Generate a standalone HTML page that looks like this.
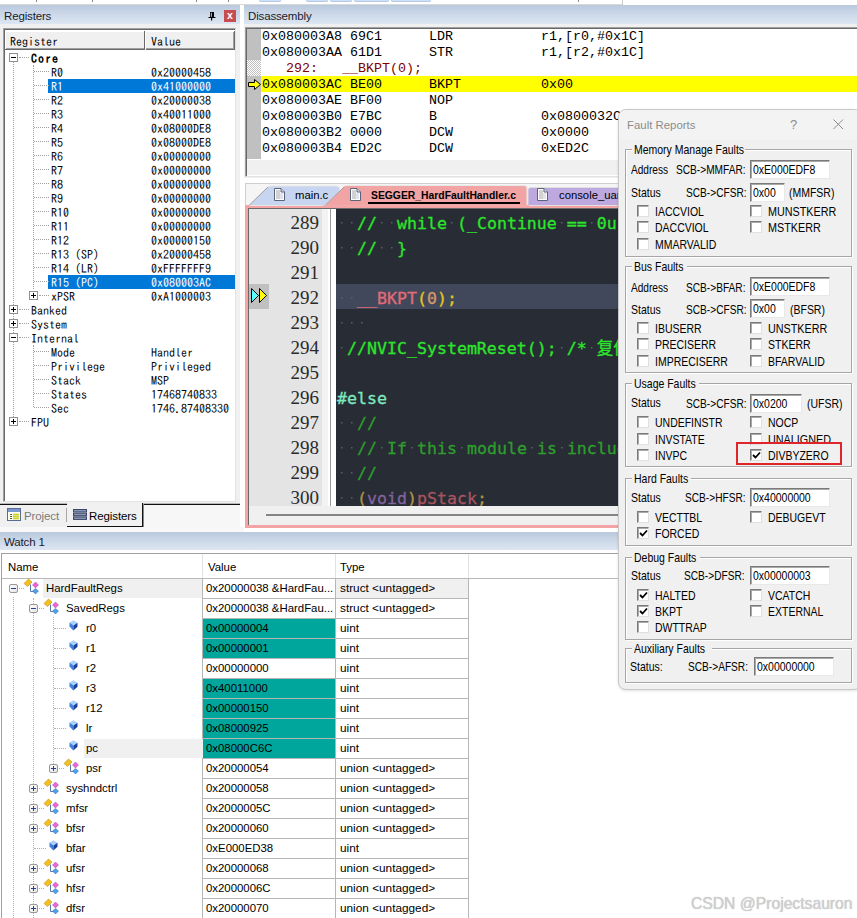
<!DOCTYPE html>
<html><head><meta charset="utf-8"><title>Keil Fault Reports</title>
<style>
html,body{margin:0;padding:0;}
body{width:857px;height:918px;overflow:hidden;background:#fff;position:relative;font-family:"Liberation Sans",sans-serif;font-size:12px;color:#000;}
.abs{position:absolute;}
.hdr{position:absolute;height:19px;background:linear-gradient(#b9c8dc,#c9d6e7 40%,#dde6f2);font:11.5px/22px "Liberation Sans",sans-serif;color:#1a1a2a;letter-spacing:-.15px;}
/* registers */
#reg{position:absolute;left:0;top:24px;width:240px;height:503px;background:#f0f0f0;}
.rg{font-family:"IPAGothic","Liberation Mono",monospace;font-size:12px;line-height:14px;white-space:pre;}
.rr{position:absolute;left:0;height:14px;width:232px;}
.rr span{position:absolute;top:0;}
.sel{background:#0078d7;color:#fff;}
.box{position:absolute;width:7px;height:7px;border:1px solid #919191;background:#fff;}
.box i{position:absolute;left:1px;top:3px;width:5px;height:1px;background:#000;}
.box b{position:absolute;left:3px;top:1px;width:1px;height:5px;background:#000;}
.wb{border-color:#989898;border-radius:2px;background:linear-gradient(135deg,#fff,#e4e4e4);}
.wb i,.wb b{background:#2a3f8f;}
.dv{position:absolute;width:0;border-left:1px dotted #a0a0a0;}
.dh{position:absolute;height:0;border-top:1px dotted #a0a0a0;}
/* disassembly */
.dis{font-family:"Liberation Mono",monospace;font-size:13.33px;line-height:18px;white-space:pre;position:absolute;left:262px;height:16px;}
/* editor */
.ln{position:absolute;left:249px;width:70px;text-align:right;font:19px/28px "Liberation Serif",serif;color:#2a2a2a;height:25px;}
.cd{position:absolute;left:337px;height:25px;font:16.6px/29px "DejaVu Sans Mono","Noto Sans CJK SC",monospace;white-space:pre;color:#2ce62c;-webkit-text-stroke:.3px;}
.ws{background:linear-gradient(#566070,#566070) 4.300px 7.500px/1.500px 1.500px no-repeat;}
/* watch */
.wr{position:absolute;left:3px;width:465px;height:20px;font:11.4px/19px "Liberation Sans",sans-serif;}
.wr u{position:absolute;left:199px;top:19px;width:267px;height:1px;background:#b6b6b6;}
.wr span{position:absolute;top:0;white-space:pre;}
.teal{position:absolute;left:200px;top:0;width:132px;height:19px;background:#00a59b;}
/* dialog */
#dlg{position:absolute;left:618px;top:109px;width:242px;height:579px;background:#f0f0f0;border:1px solid #c8c8c8;border-radius:8px;box-shadow:0 1px 3px rgba(0,0,0,.12);font:12.2px "Liberation Sans",sans-serif;color:#000;}
.gb{position:absolute;left:6px;width:225px;border:1px solid #a6a6a6;box-shadow:1px 1px 0 #fff, inset 1px 1px 0 #fff;}
.gl{position:absolute;left:6px;top:-7px;background:#f0f0f0;height:14px;}
.gl b{font-weight:normal;display:block;position:absolute;left:2px;top:0;line-height:14px;white-space:pre;transform:scaleX(.86);transform-origin:0 50%;}
.t{position:absolute;white-space:pre;line-height:14px;transform:scaleX(.86);transform-origin:0 50%;}
.in{position:absolute;height:17px;background:#fff;border:1px solid;border-color:#7a7a7a #e8e8e8 #e8e8e8 #7a7a7a;box-shadow:inset 1px 1px 0 #a8a8a8;line-height:18px;white-space:pre;box-sizing:content-box;}
.in b{font-weight:normal;display:block;position:absolute;left:2px;top:0;transform:scaleX(.86);transform-origin:0 50%;}
.cb{position:absolute;width:10px;height:10px;background:#fff;border:1px solid;border-color:#7a7a7a #e0e0e0 #e0e0e0 #7a7a7a;box-shadow:inset 1px 1px 0 #a8a8a8;}
</style></head><body>

<div class="abs" style="left:0;top:0;width:857px;height:5px;background:#fff"></div>
<div class="abs" style="left:0;top:4px;width:623px;height:1px;background:#d8d8d8"></div>
<div class="abs" style="left:622px;top:0;width:1px;height:5px;background:#c8c8c8"></div>
<div class="abs" style="left:36px;top:0;width:1px;height:2px;background:#8a8a8a"></div>
<div class="abs" style="left:92px;top:0;width:1px;height:2px;background:#8a8a8a"></div>
<div class="abs" style="left:196px;top:0;width:1px;height:2px;background:#8a8a8a"></div>
<div class="abs" style="left:228px;top:0;width:1px;height:2px;background:#8a8a8a"></div>
<div class="abs" style="left:578px;top:0;width:1px;height:2px;background:#8a8a8a"></div>
<div class="abs" style="left:259px;top:0;width:22px;height:2px;background:#cfe0f6;border:1px solid #b4cbe8;border-top:none;border-radius:0 0 3px 3px;box-sizing:border-box"></div>
<div class="abs" style="left:306px;top:0;width:22px;height:2px;background:#cfe0f6;border:1px solid #b4cbe8;border-top:none;border-radius:0 0 3px 3px;box-sizing:border-box"></div>
<div class="abs" style="left:330px;top:0;width:22px;height:2px;background:#cfe0f6;border:1px solid #b4cbe8;border-top:none;border-radius:0 0 3px 3px;box-sizing:border-box"></div>
<div class="abs" style="left:354px;top:0;width:35px;height:2px;background:#cfe0f6;border:1px solid #b4cbe8;border-top:none;border-radius:0 0 3px 3px;box-sizing:border-box"></div>
<div class="abs" style="left:391px;top:0;width:40px;height:2px;background:#cfe0f6;border:1px solid #b4cbe8;border-top:none;border-radius:0 0 3px 3px;box-sizing:border-box"></div>
<div class="hdr" style="left:0;top:5px;width:240px;"><span style="position:absolute;left:4px">Registers</span>
<svg class="abs" style="left:208px;top:6px" width="8" height="10" viewBox="0 0 8 10"><path d="M2 1h4v5h1.500v1H.5V6H2z" fill="#000"/><rect x="3" y="7" width="1.200" height="2.500" fill="#000"/><rect x="2.800" y="1.800" width="1" height="4" fill="#c8d4e4"/></svg>
<div class="abs" style="left:224px;top:5px;width:12px;height:12px;background:#c84d50;color:#fff;font:bold 10.5px/10px 'Liberation Sans',sans-serif;text-align:center;letter-spacing:0">x</div>
</div>
<div id="reg">
<div class="abs" style="left:3px;top:4px;width:231px;height:472px;background:#fff;border:1px solid;border-color:#a0a0a0 #e3e3e3 #e3e3e3 #a0a0a0;box-shadow:inset 1px 1px 0 #696969"></div>
<div class="abs rg" style="left:5px;top:7px;width:230px;height:19px;background:#f0f0f0;box-shadow:inset -1px -1px 0 #696969, inset 1px 1px 0 #fff, inset -2px -2px 0 #a0a0a0"></div>
<div class="abs" style="left:144px;top:7px;width:2px;height:19px;background:linear-gradient(90deg,#696969 50%,#fff 50%)"></div>
<div class="abs rg" style="left:10px;top:10px">Register</div>
<div class="abs rg" style="left:151px;top:10px">Value</div>
<div class="dv" style="left:13px;top:38px;height:359px"></div>
<div class="dv" style="left:33px;top:41px;height:224px"></div>
<div class="dv" style="left:33px;top:321px;height:62px"></div>
<div class="dh" style="left:19px;top:33px;width:10px"></div>
<div class="box" style="left:9px;top:29px"><i></i></div>
<div class="abs rg" style="left:31px;top:27px;font-weight:bold;letter-spacing:1px;">Core</div>
<div class="dh" style="left:34px;top:47px;width:15px"></div>
<div class="abs rg" style="left:51px;top:41px;">R0</div>
<div class="abs rg" style="left:151px;top:41px;">0x20000458</div>
<div class="abs sel" style="left:48px;top:55px;width:187px;height:14px"></div>
<div class="dh" style="left:34px;top:61px;width:15px"></div>
<div class="abs rg" style="left:51px;top:55px;color:#fff;">R1</div>
<div class="abs rg" style="left:151px;top:55px;color:#fff;">0x41000000</div>
<div class="dh" style="left:34px;top:75px;width:15px"></div>
<div class="abs rg" style="left:51px;top:69px;">R2</div>
<div class="abs rg" style="left:151px;top:69px;">0x20000038</div>
<div class="dh" style="left:34px;top:89px;width:15px"></div>
<div class="abs rg" style="left:51px;top:83px;">R3</div>
<div class="abs rg" style="left:151px;top:83px;">0x40011000</div>
<div class="dh" style="left:34px;top:103px;width:15px"></div>
<div class="abs rg" style="left:51px;top:97px;">R4</div>
<div class="abs rg" style="left:151px;top:97px;">0x08000DE8</div>
<div class="dh" style="left:34px;top:117px;width:15px"></div>
<div class="abs rg" style="left:51px;top:111px;">R5</div>
<div class="abs rg" style="left:151px;top:111px;">0x08000DE8</div>
<div class="dh" style="left:34px;top:131px;width:15px"></div>
<div class="abs rg" style="left:51px;top:125px;">R6</div>
<div class="abs rg" style="left:151px;top:125px;">0x00000000</div>
<div class="dh" style="left:34px;top:145px;width:15px"></div>
<div class="abs rg" style="left:51px;top:139px;">R7</div>
<div class="abs rg" style="left:151px;top:139px;">0x00000000</div>
<div class="dh" style="left:34px;top:159px;width:15px"></div>
<div class="abs rg" style="left:51px;top:153px;">R8</div>
<div class="abs rg" style="left:151px;top:153px;">0x00000000</div>
<div class="dh" style="left:34px;top:173px;width:15px"></div>
<div class="abs rg" style="left:51px;top:167px;">R9</div>
<div class="abs rg" style="left:151px;top:167px;">0x00000000</div>
<div class="dh" style="left:34px;top:187px;width:15px"></div>
<div class="abs rg" style="left:51px;top:181px;">R10</div>
<div class="abs rg" style="left:151px;top:181px;">0x00000000</div>
<div class="dh" style="left:34px;top:201px;width:15px"></div>
<div class="abs rg" style="left:51px;top:195px;">R11</div>
<div class="abs rg" style="left:151px;top:195px;">0x00000000</div>
<div class="dh" style="left:34px;top:215px;width:15px"></div>
<div class="abs rg" style="left:51px;top:209px;">R12</div>
<div class="abs rg" style="left:151px;top:209px;">0x00000150</div>
<div class="dh" style="left:34px;top:229px;width:15px"></div>
<div class="abs rg" style="left:51px;top:223px;">R13 (SP)</div>
<div class="abs rg" style="left:151px;top:223px;">0x20000458</div>
<div class="dh" style="left:34px;top:243px;width:15px"></div>
<div class="abs rg" style="left:51px;top:237px;">R14 (LR)</div>
<div class="abs rg" style="left:151px;top:237px;">0xFFFFFFF9</div>
<div class="abs sel" style="left:48px;top:251px;width:187px;height:14px"></div>
<div class="dh" style="left:34px;top:257px;width:15px"></div>
<div class="abs rg" style="left:51px;top:251px;color:#fff;">R15 (PC)</div>
<div class="abs rg" style="left:151px;top:251px;color:#fff;">0x080003AC</div>
<div class="dh" style="left:39px;top:271px;width:10px"></div>
<div class="box" style="left:29px;top:267px"><i></i><b></b></div>
<div class="abs rg" style="left:51px;top:265px;">xPSR</div>
<div class="abs rg" style="left:151px;top:265px;">0xA1000003</div>
<div class="dh" style="left:19px;top:285px;width:10px"></div>
<div class="box" style="left:9px;top:281px"><i></i><b></b></div>
<div class="abs rg" style="left:31px;top:279px;">Banked</div>
<div class="dh" style="left:19px;top:299px;width:10px"></div>
<div class="box" style="left:9px;top:295px"><i></i><b></b></div>
<div class="abs rg" style="left:31px;top:293px;">System</div>
<div class="dh" style="left:19px;top:313px;width:10px"></div>
<div class="box" style="left:9px;top:309px"><i></i></div>
<div class="abs rg" style="left:31px;top:307px;">Internal</div>
<div class="dh" style="left:34px;top:327px;width:15px"></div>
<div class="abs rg" style="left:51px;top:321px;">Mode</div>
<div class="abs rg" style="left:151px;top:321px;">Handler</div>
<div class="dh" style="left:34px;top:341px;width:15px"></div>
<div class="abs rg" style="left:51px;top:335px;">Privilege</div>
<div class="abs rg" style="left:151px;top:335px;">Privileged</div>
<div class="dh" style="left:34px;top:355px;width:15px"></div>
<div class="abs rg" style="left:51px;top:349px;">Stack</div>
<div class="abs rg" style="left:151px;top:349px;">MSP</div>
<div class="dh" style="left:34px;top:369px;width:15px"></div>
<div class="abs rg" style="left:51px;top:363px;">States</div>
<div class="abs rg" style="left:151px;top:363px;">17468740833</div>
<div class="dh" style="left:34px;top:383px;width:15px"></div>
<div class="abs rg" style="left:51px;top:377px;">Sec</div>
<div class="abs rg" style="left:151px;top:377px;">1746.87408330</div>
<div class="dh" style="left:19px;top:397px;width:10px"></div>
<div class="box" style="left:9px;top:393px"><i></i><b></b></div>
<div class="abs rg" style="left:31px;top:391px;">FPU</div>
<div class="abs" style="left:0;top:480px;width:240px;height:23px;background:#f0f0f0"></div>
<div class="abs" style="left:143px;top:481px;width:97px;height:22px;background:#f7f7f7"></div>
<div class="abs" style="left:0;top:479px;width:67px;height:2px;background:linear-gradient(#b8b8b8 50%,#111 50%)"></div>
<div class="abs" style="left:143px;top:479px;width:97px;height:2px;background:linear-gradient(#b8b8b8 50%,#111 50%)"></div>
<div class="abs" style="left:67px;top:479px;width:75px;height:23px;background:#f1f1f1;border-right:1px solid #111;border-bottom:1px solid #111;box-shadow:1px 1px 0 #888"></div>
<div class="abs" style="left:24px;top:484px;font:11.5px/16px 'Liberation Sans',sans-serif;color:#7a7a7a;letter-spacing:-.1px">Project</div>
<svg class="abs" style="left:7px;top:484px" width="14" height="13" viewBox="0 0 14 13"><rect x="0.5" y="0.5" width="13" height="12" fill="#fdfdf0" stroke="#5a6a90"/><rect x="1" y="1" width="12" height="3" fill="#7a98d0"/><path d="M3 6.500h2M3 8.500h2M3 10.500h2" stroke="#506030" stroke-width="1"/><path d="M6 6.500h6M6 8.500h6M6 10.500h6" stroke="#c8d020" stroke-width="1.4"/></svg>
<div class="abs" style="left:66px;top:484px;width:1px;height:14px;background:#a8a8a8"></div>
<svg class="abs" style="left:73px;top:485px" width="14" height="11" viewBox="0 0 14 11"><g fill="#8a96b8" stroke="#3a4668" stroke-width="1"><rect x=".5" y=".5" width="13" height="2.500"/><rect x=".5" y="4.200" width="13" height="2.500"/><rect x=".5" y="7.900" width="13" height="2.500"/></g></svg>
<div class="abs" style="left:89px;top:484px;font:11.5px/16px 'Liberation Sans',sans-serif;color:#000;letter-spacing:-.1px">Registers</div>
</div>
<div class="hdr" style="left:244px;top:5px;width:613px;"><span style="position:absolute;left:4px">Disassembly</span></div>
<div class="abs" style="left:244px;top:24px;width:613px;height:154px;background:#f0f0f0"></div>
<div class="abs" style="left:245px;top:27px;width:612px;height:148px;background:#fff;border:1px solid;border-color:#a0a0a0 #e3e3e3 #e3e3e3 #a0a0a0;box-shadow:inset 1px 1px 0 #696969"></div>
<div class="abs" style="left:247px;top:29px;width:14px;height:130px;background:#c0c0c0"></div>
<div class="abs" style="left:247px;top:60px;width:14px;height:16px;background:repeating-conic-gradient(#c0c0c0 0% 25%,#fff 0% 50%) 0 0/2px 2px"></div>
<div class="abs" style="left:247px;top:160px;width:610px;height:15px;background:#f0f0f0"></div>
<div class="abs" style="left:261px;top:76px;width:596px;height:16px;background:#ffff00"></div>
<div class="dis" style="top:28px">0x080003A8 69C1</div>
<div class="dis" style="top:28px;left:429px">LDR</div>
<div class="dis" style="top:28px;left:541px">r1,[r0,#0x1C]</div>
<div class="dis" style="top:44px">0x080003AA 61D1</div>
<div class="dis" style="top:44px;left:429px">STR</div>
<div class="dis" style="top:44px;left:541px">r1,[r2,#0x1C]</div>
<div class="dis" style="top:60px;color:#800000">   292:   __BKPT(0); </div>
<div class="dis" style="top:76px">0x080003AC BE00</div>
<div class="dis" style="top:76px;left:429px">BKPT</div>
<div class="dis" style="top:76px;left:541px">0x00</div>
<div class="dis" style="top:92px">0x080003AE BF00</div>
<div class="dis" style="top:92px;left:429px">NOP</div>
<div class="dis" style="top:92px;left:541px"></div>
<div class="dis" style="top:108px">0x080003B0 E7BC</div>
<div class="dis" style="top:108px;left:429px">B</div>
<div class="dis" style="top:108px;left:541px">0x0800032C</div>
<div class="dis" style="top:124px">0x080003B2 0000</div>
<div class="dis" style="top:124px;left:429px">DCW</div>
<div class="dis" style="top:124px;left:541px">0x0000</div>
<div class="dis" style="top:140px">0x080003B4 ED2C</div>
<div class="dis" style="top:140px;left:429px">DCW</div>
<div class="dis" style="top:140px;left:541px">0xED2C</div>
<svg class="abs" style="left:247px;top:78px" width="15" height="13" viewBox="0 0 15 13"><path d="M1.5 4.5h6v-3l6 5-6 5v-3h-6z" fill="#ffff00" stroke="#000" stroke-width="1"/></svg>
<div class="abs" style="left:244px;top:178px;width:613px;height:5px;background:#fff"></div>
<div class="abs" style="left:245px;top:183px;width:612px;height:23px;background:#f5f5f5;border-top:1px solid #d0d0d0;border-left:1px solid #d0d0d0"></div>
<div class="abs" style="left:245px;top:205px;width:612px;height:323px;background:#f4a4a4"></div>
<svg class="abs" style="left:245px;top:183px" width="380" height="23" viewBox="0 0 380 23"><path d="M4 22.500 L23 4 Q24 3 26 3 L91 3 Q94 3 94.500 5.500 L94.500 22.500z" fill="#c7d5f0" stroke="#e6e6e6" stroke-width="1"/><path d="M283 22.500 L283 6.500 Q283.500 4.500 286 4.500 L380 4.500 L380 22.500z" fill="#bda9e0" stroke="#e0e0e0" stroke-width="1"/><path d="M80 22.500 L99.500 3.500 Q100.500 2.500 102 2.500 L279 2.500 Q282 2.500 282 5 L282 23 L80 23z" fill="#f2a3a3" stroke="#e8e8e8" stroke-width="1"/><path d="M78 23h206" stroke="#f2a3a3" stroke-width="1.500"/><path d="M4 22.500 L23 4" stroke="#8a8a8a" stroke-width=".8" fill="none"/><path d="M80.500 22 L99.500 3.500" stroke="#9a8080" stroke-width=".8" fill="none"/></svg>
<svg class="abs" style="left:274px;top:188px" width="11" height="13" viewBox="0 0 11 13"><path d="M0.5 0.5h6.5l3.5 3.5v8.500h-10z" fill="#fdfdfd" stroke="#5a6478"/><path d="M7 0.5v3.500h3.500" fill="#cfd8ea" stroke="#5a6478"/><rect x="2" y="2" width="4" height="9" fill="#d2d2d2"/><rect x="6" y="5" width="3" height="6" fill="#dfe4f0"/></svg>
<svg class="abs" style="left:350px;top:188px" width="11" height="13" viewBox="0 0 11 13"><path d="M0.5 0.5h6.5l3.5 3.5v8.500h-10z" fill="#fdfdfd" stroke="#5a6478"/><path d="M7 0.5v3.500h3.500" fill="#cfd8ea" stroke="#5a6478"/><rect x="2" y="2" width="4" height="9" fill="#d2d2d2"/><rect x="6" y="5" width="3" height="6" fill="#dfe4f0"/></svg>
<svg class="abs" style="left:537px;top:188px" width="11" height="13" viewBox="0 0 11 13"><path d="M0.5 0.5h6.5l3.5 3.5v8.500h-10z" fill="#fdfdfd" stroke="#5a6478"/><path d="M7 0.5v3.500h3.500" fill="#cfd8ea" stroke="#5a6478"/><rect x="2" y="2" width="4" height="9" fill="#d2d2d2"/><rect x="6" y="5" width="3" height="6" fill="#dfe4f0"/></svg>
<div class="abs" style="left:295px;top:187px;font:11.3px/16px 'Liberation Sans',sans-serif;color:#000">main.c</div>
<div class="abs" style="left:371px;top:187px;font:bold 11.6px/16px 'Liberation Sans',sans-serif;color:#000;white-space:pre;transform:scaleX(.893);transform-origin:0 50%">SEGGER_HardFaultHandler.c</div>
<div class="abs" style="left:368px;top:202px;width:152px;height:2px;background:#000"></div>
<div class="abs" style="left:559px;top:187px;font:11.3px/16px 'Liberation Sans',sans-serif;color:#000">console_uar</div>
<div class="abs" style="left:248px;top:208px;width:609px;height:298px;background:#282c34"></div>
<div class="abs" style="left:248px;top:208px;width:609px;height:1px;background:#696969"></div>
<div class="abs" style="left:248px;top:208px;width:1px;height:317px;background:#696969"></div>
<div class="abs" style="left:249px;top:209px;width:73px;height:297px;background:#e4e4e4"></div>
<div class="abs" style="left:322px;top:209px;width:6px;height:297px;background:#f3f3f3"></div>
<div class="abs" style="left:328px;top:209px;width:8px;height:297px;background:#fff"></div>
<div class="abs" style="left:330px;top:209px;width:1px;height:297px;background:#9a9a9a"></div>
<div class="abs" style="left:336px;top:284px;width:521px;height:25px;background:#42485b"></div>
<div class="abs" style="left:249px;top:284px;width:20px;height:25px;background:#c0c0c0"></div>
<svg class="abs" style="left:250px;top:287px" width="18" height="17" viewBox="0 0 18 17"><path d="M1.500 1.500 L8.500 8.500 L1.500 15.500z" fill="#55ffff" stroke="#000" stroke-width="1"/><path d="M9.500 1.500 L16.500 8.500 L9.500 15.500z" fill="#ffff00" stroke="#000" stroke-width="1"/></svg>
<div class="ln" style="top:209px">289</div>
<div class="cd" style="top:209px"><span class="ws"> </span><span class="ws"> </span>//<span class="ws"> </span><span class="ws"> </span>while<span class="ws"> </span>(_Continue<span class="ws"> </span>==<span class="ws"> </span>0u</div>
<div class="ln" style="top:234px">290</div>
<div class="cd" style="top:234px"><span class="ws"> </span><span class="ws"> </span>//<span class="ws"> </span><span class="ws"> </span>}</div>
<div class="ln" style="top:259px">291</div>
<div class="ln" style="top:284px">292</div>
<div class="cd" style="top:284px"><span class="ws"> </span><span class="ws"> </span><span style="color:#e06c75">__BKPT</span><span style="color:#e6c61a">(</span><span style="color:#d19a66">0</span><span style="color:#e6c61a">);</span></div>
<div class="ln" style="top:309px">293</div>
<div class="cd" style="top:309px"><span class="ws"> </span><span class="ws"> </span><span class="ws"> </span></div>
<div class="ln" style="top:334px">294</div>
<div class="cd" style="top:334px"><span class="ws"> </span>//NVIC_SystemReset();<span class="ws"> </span>/*<span class="ws"> </span>复位</div>
<div class="ln" style="top:359px">295</div>
<div class="ln" style="top:384px">296</div>
<div class="cd" style="top:384px"><span style="color:#7ee8c0">#else</span></div>
<div class="ln" style="top:409px">297</div>
<div class="cd" style="top:409px"><span class="ws"> </span><span class="ws"> </span><span style="color:#2e9e2e">//</span></div>
<div class="ln" style="top:434px">298</div>
<div class="cd" style="top:434px"><span class="ws"> </span><span class="ws"> </span><span style="color:#2e9e2e">//<span class="ws"> </span>If<span class="ws"> </span>this<span class="ws"> </span>module<span class="ws"> </span>is<span class="ws"> </span>included</span></div>
<div class="ln" style="top:459px">299</div>
<div class="cd" style="top:459px"><span class="ws"> </span><span class="ws"> </span><span style="color:#2e9e2e">//</span></div>
<div class="ln" style="top:484px">300</div>
<div class="cd" style="top:484px"><span class="ws"> </span><span class="ws"> </span><span style="color:#b39448">(</span><span style="color:#83639f">void</span><span style="color:#b39448">)</span><span style="color:#a8545e">pStack</span><span style="color:#b39448">;</span></div>
<div class="abs" style="left:249px;top:506px;width:608px;height:19px;background:#f0f0f0"></div>
<div class="abs" style="left:266px;top:514px;width:591px;height:2px;background:#858585"></div>
<div class="abs" style="left:244px;top:528px;width:613px;height:4px;background:#fff"></div>
<div class="abs" style="left:0;top:527px;width:244px;height:5px;background:#f8f8f8"></div>
<div class="hdr" style="left:0;top:532px;width:857px;height:18px;line-height:20px"><span style="position:absolute;left:4px">Watch 1</span></div>
<div class="abs" style="left:0;top:550px;width:857px;height:368px;background:#fff"></div>
<div class="abs" style="left:1px;top:553px;width:856px;height:1px;background:#a0a0a0"></div>
<div class="abs" style="left:1px;top:553px;width:1px;height:365px;background:#a0a0a0"></div>
<div class="abs" style="left:2px;top:578px;width:855px;height:1px;background:#b8b8b8"></div>
<div class="abs" style="left:202px;top:554px;width:1px;height:24px;background:#e2e2e2"></div>
<div class="abs" style="left:202px;top:578px;width:1px;height:340px;background:#b6b6b6"></div>
<div class="abs" style="left:335px;top:554px;width:1px;height:24px;background:#e2e2e2"></div>
<div class="abs" style="left:335px;top:578px;width:1px;height:340px;background:#b6b6b6"></div>
<div class="abs" style="left:468px;top:554px;width:1px;height:24px;background:#e2e2e2"></div>
<div class="abs" style="left:468px;top:578px;width:1px;height:340px;background:#b6b6b6"></div>
<div class="abs" style="left:8px;top:559px;font:11.4px/16px 'Liberation Sans',sans-serif">Name</div>
<div class="abs" style="left:208px;top:559px;font:11.4px/16px 'Liberation Sans',sans-serif">Value</div>
<div class="abs" style="left:340px;top:559px;font:11.4px/16px 'Liberation Sans',sans-serif">Type</div>
<div class="dv" style="left:13px;top:597px;height:321px;border-color:#b0b0b0"></div>
<div class="dv" style="left:33px;top:598px;height:320px;border-color:#b0b0b0"></div>
<div class="dv" style="left:53px;top:617px;height:147px;border-color:#b0b0b0"></div>
<div class="wr" style="top:579px;"><u></u>
<div class="abs" style="left:40px;top:0;width:159px;height:19px;background:#f0f0f0"></div><div class="abs" style="left:333px;top:0;width:132px;height:19px;background:#f0f0f0"></div>
<div class="box wb" style="left:6px;top:5px;"><i></i></div>
<div class="dh" style="left:16px;top:9px;width:5px;border-color:#b0b0b0"></div>
<svg class="abs" style="left:20px;top:-1px" width="17" height="17" viewBox="0 0 17 17"><path d="M1 5.500 L5.500 1 L9 4 L4.500 8.500z" fill="#f0c020" stroke="#c89010" stroke-width=".6"/><path d="M7.500 6.500v7h3" fill="none" stroke="#5a78a8" stroke-width="1"/><path d="M9.500 7 L12.500 4 L15.500 7 L12.500 10z" fill="#e868d8" stroke="#b040a8" stroke-width=".5"/><path d="M9.500 13 L12.500 10.500 L15.500 13 L12.500 16z" fill="#50a0e8" stroke="#2868b0" stroke-width=".5"/></svg>
<span style="left:43px">HardFaultRegs</span>
<span style="left:203px">0x20000038 &amp;HardFau...</span><span style="left:337px;font-size:11.8px">struct &lt;untagged&gt;</span>
</div>
<div class="wr" style="top:599px;"><u></u>
<div class="box wb" style="left:26px;top:5px;"><i></i></div>
<div class="dh" style="left:36px;top:9px;width:5px;border-color:#b0b0b0"></div>
<svg class="abs" style="left:40px;top:-1px" width="17" height="17" viewBox="0 0 17 17"><path d="M1 5.500 L5.500 1 L9 4 L4.500 8.500z" fill="#f0c020" stroke="#c89010" stroke-width=".6"/><path d="M7.500 6.500v7h3" fill="none" stroke="#5a78a8" stroke-width="1"/><path d="M9.500 7 L12.500 4 L15.500 7 L12.500 10z" fill="#e868d8" stroke="#b040a8" stroke-width=".5"/><path d="M9.500 13 L12.500 10.500 L15.500 13 L12.500 16z" fill="#50a0e8" stroke="#2868b0" stroke-width=".5"/></svg>
<span style="left:63px">SavedRegs</span>
<span style="left:203px">0x20000038 &amp;HardFau...</span><span style="left:337px;font-size:11.8px">struct &lt;untagged&gt;</span>
</div>
<div class="wr" style="top:619px;"><u></u>
<div class="teal"></div>
<div class="dh" style="left:51px;top:9px;width:12px;border-color:#b0b0b0"></div>
<svg class="abs" style="left:66px;top:1px" width="9" height="11" viewBox="0 0 9 11"><path d="M.5 2.500 L4.500 .3 L8.500 2.800 L4.500 5.500z" fill="#a9d2fa"/><path d="M.5 2.500 L4.500 5.500 L4.300 10.500 L.5 6.500z" fill="#3f80dc"/><path d="M4.500 5.500 L8.500 2.800 L8.500 6.800 L4.300 10.500z" fill="#1b3f9e"/></svg>
<span style="left:83px">r0</span>
<span style="left:203px">0x00000004</span><span style="left:337px;font-size:11.8px">uint</span>
</div>
<div class="wr" style="top:639px;"><u></u>
<div class="teal"></div>
<div class="dh" style="left:51px;top:9px;width:12px;border-color:#b0b0b0"></div>
<svg class="abs" style="left:66px;top:1px" width="9" height="11" viewBox="0 0 9 11"><path d="M.5 2.500 L4.500 .3 L8.500 2.800 L4.500 5.500z" fill="#a9d2fa"/><path d="M.5 2.500 L4.500 5.500 L4.300 10.500 L.5 6.500z" fill="#3f80dc"/><path d="M4.500 5.500 L8.500 2.800 L8.500 6.800 L4.300 10.500z" fill="#1b3f9e"/></svg>
<span style="left:83px">r1</span>
<span style="left:203px">0x00000001</span><span style="left:337px;font-size:11.8px">uint</span>
</div>
<div class="wr" style="top:659px;"><u></u>
<div class="dh" style="left:51px;top:9px;width:12px;border-color:#b0b0b0"></div>
<svg class="abs" style="left:66px;top:1px" width="9" height="11" viewBox="0 0 9 11"><path d="M.5 2.500 L4.500 .3 L8.500 2.800 L4.500 5.500z" fill="#a9d2fa"/><path d="M.5 2.500 L4.500 5.500 L4.300 10.500 L.5 6.500z" fill="#3f80dc"/><path d="M4.500 5.500 L8.500 2.800 L8.500 6.800 L4.300 10.500z" fill="#1b3f9e"/></svg>
<span style="left:83px">r2</span>
<span style="left:203px">0x00000000</span><span style="left:337px;font-size:11.8px">uint</span>
</div>
<div class="wr" style="top:679px;"><u></u>
<div class="teal"></div>
<div class="dh" style="left:51px;top:9px;width:12px;border-color:#b0b0b0"></div>
<svg class="abs" style="left:66px;top:1px" width="9" height="11" viewBox="0 0 9 11"><path d="M.5 2.500 L4.500 .3 L8.500 2.800 L4.500 5.500z" fill="#a9d2fa"/><path d="M.5 2.500 L4.500 5.500 L4.300 10.500 L.5 6.500z" fill="#3f80dc"/><path d="M4.500 5.500 L8.500 2.800 L8.500 6.800 L4.300 10.500z" fill="#1b3f9e"/></svg>
<span style="left:83px">r3</span>
<span style="left:203px">0x40011000</span><span style="left:337px;font-size:11.8px">uint</span>
</div>
<div class="wr" style="top:699px;"><u></u>
<div class="teal"></div>
<div class="dh" style="left:51px;top:9px;width:12px;border-color:#b0b0b0"></div>
<svg class="abs" style="left:66px;top:1px" width="9" height="11" viewBox="0 0 9 11"><path d="M.5 2.500 L4.500 .3 L8.500 2.800 L4.500 5.500z" fill="#a9d2fa"/><path d="M.5 2.500 L4.500 5.500 L4.300 10.500 L.5 6.500z" fill="#3f80dc"/><path d="M4.500 5.500 L8.500 2.800 L8.500 6.800 L4.300 10.500z" fill="#1b3f9e"/></svg>
<span style="left:83px">r12</span>
<span style="left:203px">0x00000150</span><span style="left:337px;font-size:11.8px">uint</span>
</div>
<div class="wr" style="top:719px;"><u></u>
<div class="teal"></div>
<div class="dh" style="left:51px;top:9px;width:12px;border-color:#b0b0b0"></div>
<svg class="abs" style="left:66px;top:1px" width="9" height="11" viewBox="0 0 9 11"><path d="M.5 2.500 L4.500 .3 L8.500 2.800 L4.500 5.500z" fill="#a9d2fa"/><path d="M.5 2.500 L4.500 5.500 L4.300 10.500 L.5 6.500z" fill="#3f80dc"/><path d="M4.500 5.500 L8.500 2.800 L8.500 6.800 L4.300 10.500z" fill="#1b3f9e"/></svg>
<span style="left:83px">lr</span>
<span style="left:203px">0x08000925</span><span style="left:337px;font-size:11.8px">uint</span>
</div>
<div class="wr" style="top:739px;"><u></u>
<div class="abs" style="left:81px;top:0;width:119px;height:19px;background:#f0f0f0"></div>
<div class="teal"></div>
<div class="dh" style="left:51px;top:9px;width:12px;border-color:#b0b0b0"></div>
<svg class="abs" style="left:66px;top:1px" width="9" height="11" viewBox="0 0 9 11"><path d="M.5 2.500 L4.500 .3 L8.500 2.800 L4.500 5.500z" fill="#a9d2fa"/><path d="M.5 2.500 L4.500 5.500 L4.300 10.500 L.5 6.500z" fill="#3f80dc"/><path d="M4.500 5.500 L8.500 2.800 L8.500 6.800 L4.300 10.500z" fill="#1b3f9e"/></svg>
<span style="left:83px">pc</span>
<span style="left:203px">0x08000C6C</span><span style="left:337px;font-size:11.8px">uint</span>
</div>
<div class="wr" style="top:759px;"><u></u>
<div class="box wb" style="left:46px;top:5px;"><i></i><b></b></div>
<div class="dh" style="left:56px;top:9px;width:5px;border-color:#b0b0b0"></div>
<svg class="abs" style="left:60px;top:-1px" width="17" height="17" viewBox="0 0 17 17"><path d="M1 5.500 L5.500 1 L9 4 L4.500 8.500z" fill="#f0c020" stroke="#c89010" stroke-width=".6"/><path d="M7.500 6.500v7h3" fill="none" stroke="#5a78a8" stroke-width="1"/><path d="M9.500 7 L12.500 4 L15.500 7 L12.500 10z" fill="#e868d8" stroke="#b040a8" stroke-width=".5"/><path d="M9.500 13 L12.500 10.500 L15.500 13 L12.500 16z" fill="#50a0e8" stroke="#2868b0" stroke-width=".5"/></svg>
<span style="left:83px">psr</span>
<span style="left:203px">0x20000054</span><span style="left:337px;font-size:11.8px">union &lt;untagged&gt;</span>
</div>
<div class="wr" style="top:779px;"><u></u>
<div class="box wb" style="left:26px;top:5px;"><i></i><b></b></div>
<div class="dh" style="left:36px;top:9px;width:5px;border-color:#b0b0b0"></div>
<svg class="abs" style="left:40px;top:-1px" width="17" height="17" viewBox="0 0 17 17"><path d="M1 5.500 L5.500 1 L9 4 L4.500 8.500z" fill="#f0c020" stroke="#c89010" stroke-width=".6"/><path d="M7.500 6.500v7h3" fill="none" stroke="#5a78a8" stroke-width="1"/><path d="M9.500 7 L12.500 4 L15.500 7 L12.500 10z" fill="#e868d8" stroke="#b040a8" stroke-width=".5"/><path d="M9.500 13 L12.500 10.500 L15.500 13 L12.500 16z" fill="#50a0e8" stroke="#2868b0" stroke-width=".5"/></svg>
<span style="left:63px">syshndctrl</span>
<span style="left:203px">0x20000058</span><span style="left:337px;font-size:11.8px">union &lt;untagged&gt;</span>
</div>
<div class="wr" style="top:799px;"><u></u>
<div class="box wb" style="left:26px;top:5px;"><i></i><b></b></div>
<div class="dh" style="left:36px;top:9px;width:5px;border-color:#b0b0b0"></div>
<svg class="abs" style="left:40px;top:-1px" width="17" height="17" viewBox="0 0 17 17"><path d="M1 5.500 L5.500 1 L9 4 L4.500 8.500z" fill="#f0c020" stroke="#c89010" stroke-width=".6"/><path d="M7.500 6.500v7h3" fill="none" stroke="#5a78a8" stroke-width="1"/><path d="M9.500 7 L12.500 4 L15.500 7 L12.500 10z" fill="#e868d8" stroke="#b040a8" stroke-width=".5"/><path d="M9.500 13 L12.500 10.500 L15.500 13 L12.500 16z" fill="#50a0e8" stroke="#2868b0" stroke-width=".5"/></svg>
<span style="left:63px">mfsr</span>
<span style="left:203px">0x2000005C</span><span style="left:337px;font-size:11.8px">union &lt;untagged&gt;</span>
</div>
<div class="wr" style="top:819px;"><u></u>
<div class="box wb" style="left:26px;top:5px;"><i></i><b></b></div>
<div class="dh" style="left:36px;top:9px;width:5px;border-color:#b0b0b0"></div>
<svg class="abs" style="left:40px;top:-1px" width="17" height="17" viewBox="0 0 17 17"><path d="M1 5.500 L5.500 1 L9 4 L4.500 8.500z" fill="#f0c020" stroke="#c89010" stroke-width=".6"/><path d="M7.500 6.500v7h3" fill="none" stroke="#5a78a8" stroke-width="1"/><path d="M9.500 7 L12.500 4 L15.500 7 L12.500 10z" fill="#e868d8" stroke="#b040a8" stroke-width=".5"/><path d="M9.500 13 L12.500 10.500 L15.500 13 L12.500 16z" fill="#50a0e8" stroke="#2868b0" stroke-width=".5"/></svg>
<span style="left:63px">bfsr</span>
<span style="left:203px">0x20000060</span><span style="left:337px;font-size:11.8px">union &lt;untagged&gt;</span>
</div>
<div class="wr" style="top:839px;"><u></u>
<div class="dh" style="left:31px;top:9px;width:12px;border-color:#b0b0b0"></div>
<svg class="abs" style="left:46px;top:1px" width="9" height="11" viewBox="0 0 9 11"><path d="M.5 2.500 L4.500 .3 L8.500 2.800 L4.500 5.500z" fill="#a9d2fa"/><path d="M.5 2.500 L4.500 5.500 L4.300 10.500 L.5 6.500z" fill="#3f80dc"/><path d="M4.500 5.500 L8.500 2.800 L8.500 6.800 L4.300 10.500z" fill="#1b3f9e"/></svg>
<span style="left:63px">bfar</span>
<span style="left:203px">0xE000ED38</span><span style="left:337px;font-size:11.8px">uint</span>
</div>
<div class="wr" style="top:859px;"><u></u>
<div class="box wb" style="left:26px;top:5px;"><i></i><b></b></div>
<div class="dh" style="left:36px;top:9px;width:5px;border-color:#b0b0b0"></div>
<svg class="abs" style="left:40px;top:-1px" width="17" height="17" viewBox="0 0 17 17"><path d="M1 5.500 L5.500 1 L9 4 L4.500 8.500z" fill="#f0c020" stroke="#c89010" stroke-width=".6"/><path d="M7.500 6.500v7h3" fill="none" stroke="#5a78a8" stroke-width="1"/><path d="M9.500 7 L12.500 4 L15.500 7 L12.500 10z" fill="#e868d8" stroke="#b040a8" stroke-width=".5"/><path d="M9.500 13 L12.500 10.500 L15.500 13 L12.500 16z" fill="#50a0e8" stroke="#2868b0" stroke-width=".5"/></svg>
<span style="left:63px">ufsr</span>
<span style="left:203px">0x20000068</span><span style="left:337px;font-size:11.8px">union &lt;untagged&gt;</span>
</div>
<div class="wr" style="top:879px;"><u></u>
<div class="box wb" style="left:26px;top:5px;"><i></i><b></b></div>
<div class="dh" style="left:36px;top:9px;width:5px;border-color:#b0b0b0"></div>
<svg class="abs" style="left:40px;top:-1px" width="17" height="17" viewBox="0 0 17 17"><path d="M1 5.500 L5.500 1 L9 4 L4.500 8.500z" fill="#f0c020" stroke="#c89010" stroke-width=".6"/><path d="M7.500 6.500v7h3" fill="none" stroke="#5a78a8" stroke-width="1"/><path d="M9.500 7 L12.500 4 L15.500 7 L12.500 10z" fill="#e868d8" stroke="#b040a8" stroke-width=".5"/><path d="M9.500 13 L12.500 10.500 L15.500 13 L12.500 16z" fill="#50a0e8" stroke="#2868b0" stroke-width=".5"/></svg>
<span style="left:63px">hfsr</span>
<span style="left:203px">0x2000006C</span><span style="left:337px;font-size:11.8px">union &lt;untagged&gt;</span>
</div>
<div class="wr" style="top:899px;"><u></u>
<div class="box wb" style="left:26px;top:5px;"><i></i><b></b></div>
<div class="dh" style="left:36px;top:9px;width:5px;border-color:#b0b0b0"></div>
<svg class="abs" style="left:40px;top:-1px" width="17" height="17" viewBox="0 0 17 17"><path d="M1 5.500 L5.500 1 L9 4 L4.500 8.500z" fill="#f0c020" stroke="#c89010" stroke-width=".6"/><path d="M7.500 6.500v7h3" fill="none" stroke="#5a78a8" stroke-width="1"/><path d="M9.500 7 L12.500 4 L15.500 7 L12.500 10z" fill="#e868d8" stroke="#b040a8" stroke-width=".5"/><path d="M9.500 13 L12.500 10.500 L15.500 13 L12.500 16z" fill="#50a0e8" stroke="#2868b0" stroke-width=".5"/></svg>
<span style="left:63px">dfsr</span>
<span style="left:203px">0x20000070</span><span style="left:337px;font-size:11.8px">union &lt;untagged&gt;</span>
</div>
<div class="abs" style="left:691px;top:895px;font:15.7px/18px 'Liberation Sans',sans-serif;color:#d0d0d0;text-shadow:0 0 1px #b4b4b4;white-space:pre">CSDN @Projectsauron</div>
<div id="dlg">
<div class="abs" style="left:0;top:0;width:242px;height:30px;background:#f3f3f3;border-radius:7px 7px 0 0"></div>
<div class="t" style="left:8px;top:7px;font:11.4px/16px 'Liberation Sans',sans-serif;color:#8c8c8c;transform:none">Fault Reports</div>
<div class="t" style="left:171px;top:7px;font:13px/16px 'Liberation Sans',sans-serif;color:#8c8c8c;transform:none">?</div>
<svg class="abs" style="left:214px;top:9px" width="11" height="11" viewBox="0 0 11 11"><path d="M.5 .5l9.500 9.500M10 .5l-9.500 9.500" stroke="#8a8a8a" stroke-width="1"/></svg>
<div class="gb" style="top:39px;height:106px"><span class="gl" style="width:113px"><b>Memory Manage Faults</b></span></div>
<div class="t" style="left:12px;top:53px;transform:scaleX(.83)">Address</div>
<div class="t" style="left:57px;top:53px;transform:scaleX(.832)">SCB-&gt;MMFAR:</div>
<div class="in" style="left:131px;top:50px;width:78px"><b>0xE000EDF8</b></div>
<div class="t" style="left:12px;top:76px;">Status</div>
<div class="t" style="left:67px;top:76px;transform:scaleX(.832)">SCB-&gt;CFSR:</div>
<div class="in" style="left:131px;top:73px;width:33px"><b>0x00</b></div>
<div class="t" style="left:170px;top:76px;">(MMFSR)</div>
<div class="cb" style="left:18px;top:95px"></div>
<div class="t" style="left:36px;top:95px;">IACCVIOL</div>
<div class="cb" style="left:131px;top:95px"></div>
<div class="t" style="left:149px;top:95px;transform:scaleX(.885)">MUNSTKERR</div>
<div class="cb" style="left:18px;top:111px"></div>
<div class="t" style="left:36px;top:111px;">DACCVIOL</div>
<div class="cb" style="left:131px;top:111px"></div>
<div class="t" style="left:149px;top:111px;transform:scaleX(.885)">MSTKERR</div>
<div class="cb" style="left:18px;top:128px"></div>
<div class="t" style="left:36px;top:128px;">MMARVALID</div>
<div class="gb" style="top:156px;height:105px"><span class="gl" style="width:55px"><b>Bus Faults</b></span></div>
<div class="t" style="left:12px;top:171px;transform:scaleX(.83)">Address</div>
<div class="t" style="left:67px;top:171px;transform:scaleX(.832)">SCB-&gt;BFAR:</div>
<div class="in" style="left:131px;top:167px;width:78px"><b>0xE000EDF8</b></div>
<div class="t" style="left:12px;top:193px;">Status</div>
<div class="t" style="left:67px;top:193px;transform:scaleX(.832)">SCB-&gt;CFSR:</div>
<div class="in" style="left:131px;top:189px;width:33px"><b>0x00</b></div>
<div class="t" style="left:171px;top:193px;">(BFSR)</div>
<div class="cb" style="left:18px;top:212px"></div>
<div class="t" style="left:36px;top:212px;">IBUSERR</div>
<div class="cb" style="left:131px;top:212px"></div>
<div class="t" style="left:149px;top:212px;transform:scaleX(.885)">UNSTKERR</div>
<div class="cb" style="left:18px;top:228px"></div>
<div class="t" style="left:36px;top:228px;">PRECISERR</div>
<div class="cb" style="left:131px;top:228px"></div>
<div class="t" style="left:149px;top:228px;">STKERR</div>
<div class="cb" style="left:18px;top:245px"></div>
<div class="t" style="left:36px;top:245px;">IMPRECISERR</div>
<div class="cb" style="left:131px;top:245px"></div>
<div class="t" style="left:149px;top:245px;">BFARVALID</div>
<div class="gb" style="top:273px;height:82px"><span class="gl" style="width:67px"><b>Usage Faults</b></span></div>
<div class="t" style="left:12px;top:286px;">Status</div>
<div class="t" style="left:67px;top:287px;transform:scaleX(.832)">SCB-&gt;CFSR:</div>
<div class="in" style="left:131px;top:284px;width:50px"><b>0x0200</b></div>
<div class="t" style="left:188px;top:287px;">(UFSR)</div>
<div class="cb" style="left:18px;top:306px"></div>
<div class="t" style="left:36px;top:306px;">UNDEFINSTR</div>
<div class="cb" style="left:131px;top:306px"></div>
<div class="t" style="left:149px;top:306px;">NOCP</div>
<div class="cb" style="left:18px;top:323px"></div>
<div class="t" style="left:36px;top:323px;">INVSTATE</div>
<div class="cb" style="left:131px;top:323px"></div>
<div class="t" style="left:149px;top:323px;transform:scaleX(.885)">UNALIGNED</div>
<div class="cb" style="left:18px;top:339px"></div>
<div class="t" style="left:36px;top:339px;">INVPC</div>
<div class="cb" style="left:131px;top:339px"><svg class="abs" style="left:1px;top:1px" width="9" height="9" viewBox="0 0 9 9"><path d="M1 4 L3.500 6.500 L8 1.500" fill="none" stroke="#000" stroke-width="1.8"/></svg></div>
<div class="t" style="left:149px;top:339px;">DIVBYZERO</div>
<div class="gb" style="top:368px;height:66px"><span class="gl" style="width:59px"><b>Hard Faults</b></span></div>
<div class="t" style="left:12px;top:381px;">Status</div>
<div class="t" style="left:66px;top:381px;transform:scaleX(.832)">SCB-&gt;HFSR:</div>
<div class="in" style="left:131px;top:378px;width:78px"><b>0x40000000</b></div>
<div class="cb" style="left:18px;top:401px"></div>
<div class="t" style="left:36px;top:401px;">VECTTBL</div>
<div class="cb" style="left:131px;top:401px"></div>
<div class="t" style="left:149px;top:401px;">DEBUGEVT</div>
<div class="cb" style="left:18px;top:417px"><svg class="abs" style="left:1px;top:1px" width="9" height="9" viewBox="0 0 9 9"><path d="M1 4 L3.500 6.500 L8 1.500" fill="none" stroke="#000" stroke-width="1.8"/></svg></div>
<div class="t" style="left:36px;top:417px;">FORCED</div>
<div class="gb" style="top:447px;height:81px"><span class="gl" style="width:68px"><b>Debug Faults</b></span></div>
<div class="t" style="left:12px;top:459px;">Status</div>
<div class="t" style="left:65px;top:459px;transform:scaleX(.832)">SCB-&gt;DFSR:</div>
<div class="in" style="left:131px;top:456px;width:78px"><b>0x00000003</b></div>
<div class="cb" style="left:18px;top:479px"><svg class="abs" style="left:1px;top:1px" width="9" height="9" viewBox="0 0 9 9"><path d="M1 4 L3.500 6.500 L8 1.500" fill="none" stroke="#000" stroke-width="1.8"/></svg></div>
<div class="t" style="left:36px;top:479px;">HALTED</div>
<div class="cb" style="left:131px;top:479px"></div>
<div class="t" style="left:149px;top:479px;">VCATCH</div>
<div class="cb" style="left:18px;top:495px"><svg class="abs" style="left:1px;top:1px" width="9" height="9" viewBox="0 0 9 9"><path d="M1 4 L3.500 6.500 L8 1.500" fill="none" stroke="#000" stroke-width="1.8"/></svg></div>
<div class="t" style="left:36px;top:495px;">BKPT</div>
<div class="cb" style="left:131px;top:495px"></div>
<div class="t" style="left:149px;top:495px;">EXTERNAL</div>
<div class="cb" style="left:18px;top:511px"></div>
<div class="t" style="left:36px;top:511px;">DWTTRAP</div>
<div class="gb" style="top:538px;height:33px"><span class="gl" style="width:80px"><b>Auxiliary Faults</b></span></div>
<div class="t" style="left:11px;top:550px;">Status:</div>
<div class="t" style="left:69px;top:550px;transform:scaleX(.832)">SCB-&gt;AFSR:</div>
<div class="in" style="left:135px;top:547px;width:78px"><b>0x00000000</b></div>
<div class="abs" style="left:117px;top:332px;width:102px;height:19px;border:2px solid #e0242c"></div>
</div>
</body></html>
